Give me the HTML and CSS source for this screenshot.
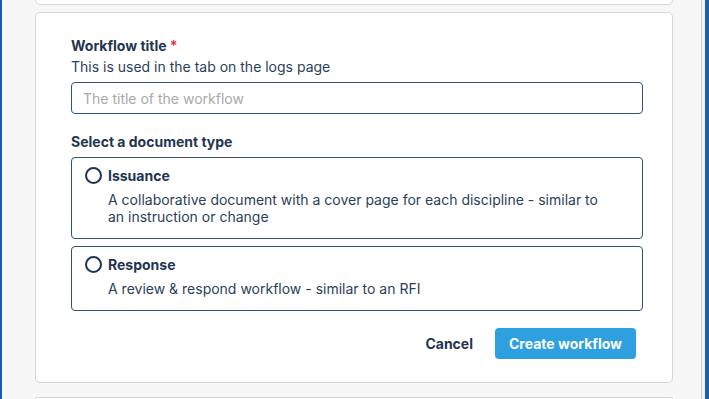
FILE: index.html
```html
<!DOCTYPE html>
<html lang="en">
<head>
<meta charset="utf-8">
<title>Create workflow</title>
<link rel="stylesheet" href="styles.css">
</head>
<body>
<div class="page">
  <div class="edge-left"></div>
  <main class="content">
    <div class="card card-prev"></div>
    <section class="card card-main">
      <div class="field">
        <label class="label" for="wf-title">Workflow title<span class="req">*</span></label>
        <div class="help">This is used in the tab on the logs page</div>
        <input id="wf-title" class="input" type="text" placeholder="The title of the workflow">
      </div>
      <div class="field field-type">
        <div class="label">Select a document type</div>
        <div class="options">
          <label class="option">
            <span class="option-head"><span class="radio"></span><span class="option-title">Issuance</span></span>
            <span class="option-desc">A collaborative document with a cover page for each discipline - similar to an instruction or change</span>
          </label>
          <label class="option">
            <span class="option-head"><span class="radio"></span><span class="option-title">Response</span></span>
            <span class="option-desc">A review &amp; respond workflow - similar to an RFI</span>
          </label>
        </div>
      </div>
      <div class="actions">
        <button class="btn btn-text" type="button">Cancel</button>
        <button class="btn btn-primary" type="button">Create workflow</button>
      </div>
    </section>
    <div class="card card-next"></div>
  </main>
  <div class="scroll-gutter"></div>
  <div class="edge-right"></div>
</div>
</body>
</html>
```

FILE: styles.css
```css
* { box-sizing: border-box; }
html, body { margin: 0; padding: 0; }
body {
  background: #f7f7f7;
  font-family: Inter, "Noto Sans", "Liberation Sans", sans-serif;
  color: #1f3553;
  width: 709px;
  height: 399px;
  overflow: hidden;
}
.page {
  display: flex;
  height: 399px;
}
.edge-left { width: 2px; background: #1a5db4; flex: none; }
.content {
  width: 699px;
  flex: none;
  padding: 0 28px 0 33px;
  display: flex;
  flex-direction: column;
  gap: 7px;
}
.scroll-gutter {
  width: 4px;
  flex: none;
  border-left: 1px solid #cfcfcf;
  background: #f2f2f2;
}
.edge-right { width: 4px; flex: none; background: #1a5db4; }

.card {
  background: #fff;
  border: 1px solid #d6d6d6;
  border-radius: 5px;
  flex: none;
}
.card-prev { height: 25px; margin-top: -20px; }
.card-main {
  height: 371px;
  padding: 22px 28px 0 35px;
}
.card-next {
  height: 2px;
  margin-top: 7px;
  border-bottom: 0;
  border-radius: 5px 5px 0 0;
}

.label {
  display: block;
  font-weight: 700;
  font-size: 14px;
  line-height: 21px;
  color: #1f3553;
}
.req { color: #e03a3e; margin-left: 3px; }
.help {
  font-size: 14px;
  line-height: 21px;
  color: #2a3f5a;
}
.input {
  display: block;
  width: 572px;
  height: 32px;
  margin-top: 5px;
  border: 1px solid #2d5283;
  border-radius: 4px;
  padding: 0 11px;
  font-family: inherit;
  font-size: 14px;
  color: #1f3553;
  outline: none;
}
.input::placeholder { color: #a9a9a9; }

.field-type { margin-top: 17px; }
.options {
  display: flex;
  flex-direction: column;
  gap: 7px;
  margin-top: 5px;
  width: 572px;
}
.option {
  display: flex;
  flex-direction: column;
  border: 1px solid #33506f;
  border-radius: 4px;
  padding: 7px 12px 13px 13px;
  cursor: pointer;
}
.option-head {
  display: flex;
  align-items: center;
  gap: 6px;
  height: 21px;
}
.radio {
  width: 17px;
  height: 17px;
  border: 2px solid #1f3553;
  border-radius: 50%;
  flex: none;
}
.option-title {
  font-weight: 700;
  font-size: 14px;
  line-height: 21px;
}
.option-desc {
  margin-top: 5px;
  padding-left: 23px;
  padding-right: 24px;
  font-size: 14px;
  line-height: 17px;
  color: #2a3f5a;
}

.actions {
  display: flex;
  justify-content: flex-end;
  align-items: center;
  gap: 6px;
  margin-top: 17px;
  width: 565px;
}
.btn {
  font-family: inherit;
  font-size: 14px;
  font-weight: 700;
  height: 31px;
  border-radius: 4px;
  border: 0;
  cursor: pointer;
}
.btn-text {
  background: transparent;
  color: #1f3553;
  padding: 0 16px;
}
.btn-primary {
  background: #2e9fdf;
  color: #fff;
  width: 141px;
  padding: 0;
}
```
